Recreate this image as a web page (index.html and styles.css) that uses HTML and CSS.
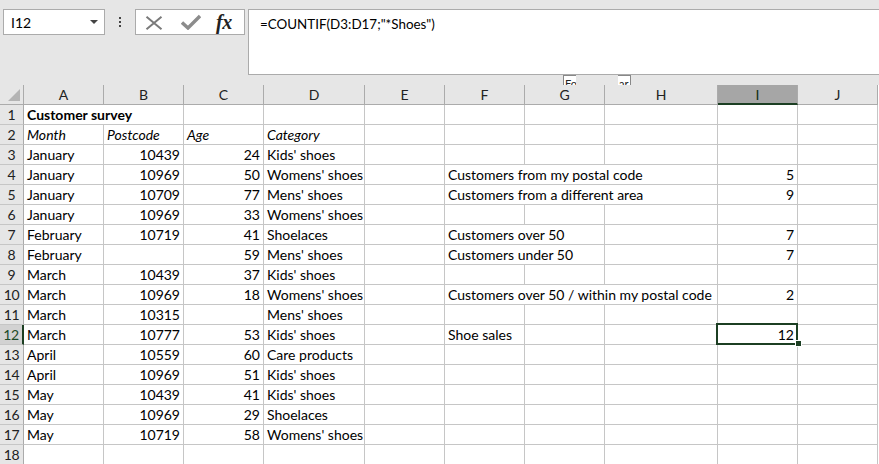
FILE: index.html
```html
<!DOCTYPE html>
<html>
<head>
<meta charset="utf-8">
<link rel="stylesheet" href="styles.css">
</head>
<body>
<div class="app">
  <div class="topbar">
    <div class="namebox"><span class="nb-text">I12</span><span class="nb-arrow"></span></div>
    <div class="vdots"><i></i><i></i><i></i></div>
    <div class="fbuttons">
      <svg class="ico-x" width="18" height="14" viewBox="0 0 18 14"><path d="M1.5 0.8 L16.5 13.2 M16.5 0.8 L1.5 13.2" stroke="#7a7a7a" stroke-width="2" fill="none"/></svg>
      <svg class="ico-check" width="20" height="16" viewBox="0 0 20 16"><path d="M1 8.5 L7 14 L19 2" stroke="#8c8c8c" stroke-width="3.4" fill="none" stroke-linejoin="miter"/></svg>
      <span class="fx">fx</span>
    </div>
    <div class="formula">=COUNTIF(D3:D17;"*Shoes")</div>
    <span class="tipfrag tip1"><span class="tiptext">Fo</span></span>
    <span class="tipfrag tip2"><span class="tiptext">ar</span></span>
  </div>
  <div class="sheet">
    <div class="corner"><span class="tri"></span></div>
    <div class="ch">A</div><div class="ch">B</div><div class="ch">C</div><div class="ch">D</div><div class="ch">E</div><div class="ch">F</div><div class="ch">G</div><div class="ch">H</div><div class="ch sel">I</div><div class="ch">J</div>

    <div class="rh">1</div><div class="c s2 b">Customer survey</div><div class="c"></div><div class="c"></div><div class="c"></div><div class="c"></div><div class="c"></div><div class="c"></div><div class="c"></div><div class="c"></div>
    <div class="rh">2</div><div class="c i">Month</div><div class="c i">Postcode</div><div class="c i">Age</div><div class="c i">Category</div><div class="c"></div><div class="c"></div><div class="c"></div><div class="c"></div><div class="c"></div><div class="c"></div>
    <div class="rh">3</div><div class="c">January</div><div class="c r">10439</div><div class="c r">24</div><div class="c">Kids' shoes</div><div class="c"></div><div class="c"></div><div class="c"></div><div class="c"></div><div class="c"></div><div class="c"></div>
    <div class="rh">4</div><div class="c">January</div><div class="c r">10969</div><div class="c r">50</div><div class="c">Womens' shoes</div><div class="c"></div><div class="c s3">Customers from my postal code</div><div class="c r">5</div><div class="c"></div>
    <div class="rh">5</div><div class="c">January</div><div class="c r">10709</div><div class="c r">77</div><div class="c">Mens' shoes</div><div class="c"></div><div class="c s3">Customers from a different area</div><div class="c r">9</div><div class="c"></div>
    <div class="rh">6</div><div class="c">January</div><div class="c r">10969</div><div class="c r">33</div><div class="c">Womens' shoes</div><div class="c"></div><div class="c"></div><div class="c"></div><div class="c"></div><div class="c"></div><div class="c"></div>
    <div class="rh">7</div><div class="c">February</div><div class="c r">10719</div><div class="c r">41</div><div class="c">Shoelaces</div><div class="c"></div><div class="c s2">Customers over 50</div><div class="c"></div><div class="c r">7</div><div class="c"></div>
    <div class="rh">8</div><div class="c">February</div><div class="c r"></div><div class="c r">59</div><div class="c">Mens' shoes</div><div class="c"></div><div class="c s2">Customers under 50</div><div class="c"></div><div class="c r">7</div><div class="c"></div>
    <div class="rh">9</div><div class="c">March</div><div class="c r">10439</div><div class="c r">37</div><div class="c">Kids' shoes</div><div class="c"></div><div class="c"></div><div class="c"></div><div class="c"></div><div class="c"></div><div class="c"></div>
    <div class="rh">10</div><div class="c">March</div><div class="c r">10969</div><div class="c r">18</div><div class="c">Womens' shoes</div><div class="c"></div><div class="c s3">Customers over 50 / within my postal code</div><div class="c r">2</div><div class="c"></div>
    <div class="rh">11</div><div class="c">March</div><div class="c r">10315</div><div class="c r"></div><div class="c">Mens' shoes</div><div class="c"></div><div class="c"></div><div class="c"></div><div class="c"></div><div class="c"></div><div class="c"></div>
    <div class="rh rsel">12</div><div class="c">March</div><div class="c r">10777</div><div class="c r">53</div><div class="c">Kids' shoes</div><div class="c"></div><div class="c">Shoe sales</div><div class="c"></div><div class="c"></div><div class="c r active">12<span class="selbox"></span><span class="handle"></span></div><div class="c"></div>
    <div class="rh">13</div><div class="c">April</div><div class="c r">10559</div><div class="c r">60</div><div class="c">Care products</div><div class="c"></div><div class="c"></div><div class="c"></div><div class="c"></div><div class="c"></div><div class="c"></div>
    <div class="rh">14</div><div class="c">April</div><div class="c r">10969</div><div class="c r">51</div><div class="c">Kids' shoes</div><div class="c"></div><div class="c"></div><div class="c"></div><div class="c"></div><div class="c"></div><div class="c"></div>
    <div class="rh">15</div><div class="c">May</div><div class="c r">10439</div><div class="c r">41</div><div class="c">Kids' shoes</div><div class="c"></div><div class="c"></div><div class="c"></div><div class="c"></div><div class="c"></div><div class="c"></div>
    <div class="rh">16</div><div class="c">May</div><div class="c r">10969</div><div class="c r">29</div><div class="c">Shoelaces</div><div class="c"></div><div class="c"></div><div class="c"></div><div class="c"></div><div class="c"></div><div class="c"></div>
    <div class="rh">17</div><div class="c">May</div><div class="c r">10719</div><div class="c r">58</div><div class="c">Womens' shoes</div><div class="c"></div><div class="c"></div><div class="c"></div><div class="c"></div><div class="c"></div><div class="c"></div>
    <div class="rh">18</div><div class="c"></div><div class="c"></div><div class="c"></div><div class="c"></div><div class="c"></div><div class="c"></div><div class="c"></div><div class="c"></div><div class="c"></div><div class="c"></div>
  </div>
</div>
</body>
</html>
```

FILE: styles.css
```css
* { box-sizing: border-box; }
html, body { margin: 0; padding: 0; }
body {
  width: 879px;
  height: 464px;
  overflow: hidden;
  background: #ffffff;
  font-family: Lato, "Liberation Sans", sans-serif;
  font-size: 14px;
  color: #000;
}
.app { width: 879px; }

.topbar {
  position: relative;
  height: 85px;
  background: #e6e6e6;
  display: flex;
  align-items: flex-start;
  padding-top: 9px;
  padding-left: 3px;
}
.namebox {
  width: 102px;
  height: 26px;
  background: #fff;
  border: 1px solid #ababab;
  display: flex;
  align-items: center;
  justify-content: space-between;
  padding: 0 6px 0 7px;
}
.nb-text { font-size: 14px; line-height: 16px; padding-top: 1px; }
.nb-arrow {
  width: 0; height: 0;
  border-left: 4px solid transparent;
  border-right: 4px solid transparent;
  border-top: 4px solid #444;
}
.vdots {
  width: 30px;
  height: 26px;
  display: flex;
  flex-direction: column;
  align-items: center;
  justify-content: center;
  gap: 2px;
  padding-bottom: 1px;
}
.vdots i { display: block; width: 2px; height: 2px; background: #444; }
.fbuttons {
  width: 110px;
  height: 26px;
  background: #fff;
  border: 1px solid #ababab;
  display: flex;
  align-items: center;
  padding-left: 9px;
}
.ico-x { margin-top: 1px; }
.ico-check { margin-left: 18px; }
.fx {
  margin-left: 15px;
  font-family: "Liberation Serif", "DejaVu Serif", serif;
  font-style: italic;
  font-weight: bold;
  font-size: 20px;
  line-height: 20px;
  color: #222;
  letter-spacing: -0.5px;
}
.formula {
  margin-left: 3px;
  flex: 1;
  height: 66px;
  background: #fff;
  border: 1px solid #ababab;
  border-right: none;
  padding: 5px 0 0 11px;
  font-size: 13.4px;
  line-height: 18px;
}
.tipfrag {
  position: absolute;
  top: 75px;
  height: 10px;
  overflow: hidden;
  background: #fff;
  border-left: 1px solid #888;
  border-top: 1px solid #888;
  color: #222;
}
.tiptext {
  display: block;
  font-size: 11px;
  line-height: 9px;
  height: 9px;
  padding: 3px 0 0 1px;
  overflow: hidden;
}
.tip1 { left: 563px; width: 13px; }
.tip2 { left: 618px; width: 13px; border-left: none; border-right: 1px solid #888; }

.sheet {
  display: grid;
  grid-template-columns: 24px 80px 80px 80px 101px 80px 80px 80px 113px 80px 80px;
  grid-auto-rows: 20px;
}
.corner {
  position: relative;
  background: #e6e6e6;
  border-right: 1px solid #ababab;
  border-bottom: 1px solid #ababab;
}
.tri {
  position: absolute;
  right: 3px;
  bottom: 3px;
  width: 0; height: 0;
  border-left: 12px solid transparent;
  border-bottom: 12px solid #b4b4b4;
}
.ch {
  background: #e6e6e6;
  border-right: 1px solid #ababab;
  border-bottom: 1px solid #ababab;
  text-align: center;
  line-height: 19px;
  font-size: 14px;
  color: #222;
}
.ch.sel {
  background: #a6a6a6;
  border-bottom: 2px solid #1c3f23;
  color: #0f2e15;
}
.rh {
  background: #e6e6e6;
  border-right: 1px solid #ababab;
  border-bottom: 1px solid #c6c6c6;
  text-align: center;
  line-height: 19px;
  font-size: 14px;
  color: #222;
  letter-spacing: -0.3px;
}
.rh.rsel { background: #d2d2d2; color: #1c4a27; border-right: 2px solid #1c3f23; }
.c {
  border-right: 1px solid #c6c6c6;
  border-bottom: 1px solid #c6c6c6;
  line-height: 19px;
  padding: 0 2px 0 3px;
  white-space: nowrap;
  overflow: visible;
}
.r { text-align: right; padding: 0 3px 0 2px; }
.b { font-weight: bold; }
.i { font-style: italic; }
.s2 { grid-column: span 2; }
.s3 { grid-column: span 3; }
.active { position: relative; }
.selbox {
  position: absolute;
  left: -2px;
  top: -2px;
  width: 82px;
  height: 22px;
  border: 2px solid #1c3f23;
  pointer-events: none;
}
.handle {
  position: absolute;
  left: 77px;
  top: 15px;
  width: 7px;
  height: 7px;
  background: #1c3f23;
  border: 1px solid #fff;
}
```
